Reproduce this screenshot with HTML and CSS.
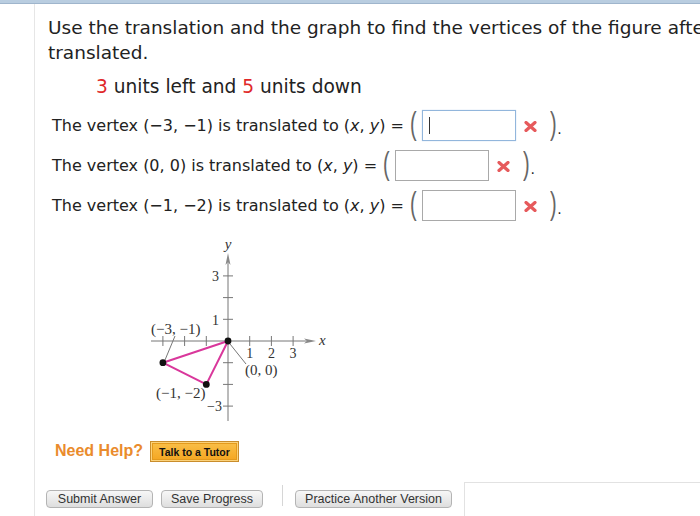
FILE: index.html
```html
<!DOCTYPE html>
<html>
<head>
<meta charset="utf-8">
<link rel="stylesheet" href="styles.css">
</head>
<body>
<div class="topbar"></div>
<div class="page">
  <div class="gutter"></div>
  <div class="content">
    <p class="prompt">
      <span class="line">Use the translation and the graph to find the vertices of the figure after it has been</span>
      <span class="line">translated.</span>
    </p>
    <p class="rule"><span class="red">3</span> units left and <span class="red">5</span> units down</p>

    <div class="rows">
      <div class="row">
        <span class="stmt">The vertex (−3, −1) is translated to (<i>x</i>, <i>y</i>) =</span>
        <span class="paren">(</span>
        <span class="box focus"><span class="caret"></span></span>
        <svg class="wrong" width="13" height="11" viewBox="0 0 13 11"><path d="M2 1.5 L11 9.5 M11 1.5 L2 9.5"/></svg>
        <span class="paren close">)</span><span class="dot">.</span>
      </div>
      <div class="row">
        <span class="stmt">The vertex (0, 0) is translated to (<i>x</i>, <i>y</i>) =</span>
        <span class="paren">(</span>
        <span class="box"></span>
        <svg class="wrong" width="13" height="11" viewBox="0 0 13 11"><path d="M2 1.5 L11 9.5 M11 1.5 L2 9.5"/></svg>
        <span class="paren close">)</span><span class="dot">.</span>
      </div>
      <div class="row">
        <span class="stmt">The vertex (−1, −2) is translated to (<i>x</i>, <i>y</i>) =</span>
        <span class="paren">(</span>
        <span class="box"></span>
        <svg class="wrong" width="13" height="11" viewBox="0 0 13 11"><path d="M2 1.5 L11 9.5 M11 1.5 L2 9.5"/></svg>
        <span class="paren close">)</span><span class="dot">.</span>
      </div>
    </div>

    <div class="graph">
      <svg width="200" height="195" viewBox="0 0 200 195">
        <g transform="translate(87,106)">
          <g class="axis">
            <line x1="-77" y1="0" x2="80" y2="0"/>
            <line x1="0" y1="-82" x2="0" y2="80"/>
            <line x1="-65.1" y1="-5" x2="-65.1" y2="5"/>
            <line x1="-43.4" y1="-5" x2="-43.4" y2="5"/>
            <line x1="-21.7" y1="-5" x2="-21.7" y2="5"/>
            <line x1="21.7" y1="-5" x2="21.7" y2="5"/>
            <line x1="43.4" y1="-5" x2="43.4" y2="5"/>
            <line x1="65.1" y1="-5" x2="65.1" y2="5"/>
            <line x1="-5" y1="-65.1" x2="5" y2="-65.1"/>
            <line x1="-5" y1="-43.4" x2="5" y2="-43.4"/>
            <line x1="-5" y1="-21.7" x2="5" y2="-21.7"/>
            <line x1="-5" y1="21.7" x2="5" y2="21.7"/>
            <line x1="-5" y1="43.4" x2="5" y2="43.4"/>
            <line x1="-5" y1="65.1" x2="5" y2="65.1"/>
            <line x1="-53" y1="-5" x2="-63" y2="19"/>
            <line x1="2" y1="3" x2="18" y2="23"/>
          </g>
          <path class="arrow" d="M76 -2.5 L88 0 L76 2.5 L79 0 Z"/>
          <path class="arrow" d="M-2.5 -76 L0 -88 L2.5 -76 L0 -79 Z"/>
          <polygon class="tri" points="0,0 -65.1,21.7 -21.7,43.4"/>
          <circle class="pt" cx="0" cy="0" r="3.4"/>
          <circle class="pt" cx="-65.1" cy="21.7" r="3.4"/>
          <circle class="pt" cx="-21.7" cy="43.4" r="3.4"/>
          <text class="ital" x="0" y="-92" text-anchor="middle">y</text>
          <text class="ital" x="91" y="4">x</text>
          <text class="num" x="-9" y="-60" text-anchor="end">3</text>
          <text class="num" x="-9" y="-16.5" text-anchor="end">1</text>
          <text class="num" x="-6" y="70" text-anchor="end">−3</text>
          <text class="num" x="21.7" y="17" text-anchor="middle">1</text>
          <text class="num" x="43.4" y="17" text-anchor="middle">2</text>
          <text class="num" x="65.1" y="17" text-anchor="middle">3</text>
          <text class="lbl" x="-77" y="-7">(−3, −1)</text>
          <text class="lbl" x="17" y="34">(0, 0)</text>
          <text class="lbl" x="-72" y="57">(−1, −2)</text>
        </g>
      </svg>
    </div>

    <div class="help">
      <span class="help-label">Need Help?</span>
      <span class="tutor"><span class="tutor-in">Talk to a Tutor</span></span>
    </div>

    <div class="actions">
      <span class="btn submit">Submit Answer</span>
      <span class="btn save">Save Progress</span>
      <span class="sep"></span>
      <span class="btn practice">Practice Another Version</span>
      <span class="panel"></span>
    </div>
  </div>
</div>
</body>
</html>
```

FILE: styles.css
```css
html, body {
  margin: 0;
  padding: 0;
  background: #fff;
  overflow: hidden;
  width: 700px;
  height: 516px;
}
body {
  font-family: "DejaVu Sans", Verdana, sans-serif;
  color: #222;
}
.topbar {
  height: 3px;
  background: #b9cde0;
  border-bottom: 1px solid #9fb5cc;
}
.page {
  display: flex;
  height: 512px;
}
.gutter {
  width: 34px;
  flex: none;
  border-right: 1px solid #e6e6e6;
}
.content {
  flex: none;
  width: 900px;
  padding-left: 13px;
  overflow: hidden;
}
.prompt {
  margin: 11px 0 0 0;
  font-size: 18.5px;
  line-height: 25px;
  color: #222;
}
.line {
  display: block;
  white-space: nowrap;
}
.rule {
  margin: 9px 0 0 48px;
  font-size: 18.6px;
  line-height: 25px;
}
.red { color: #e0282a; }
.rows {
  margin: 6px 0 0 4px;
}
.row {
  display: flex;
  align-items: center;
  height: 40px;
  font-size: 16px;
  white-space: nowrap;
}
.stmt i { font-style: italic; }
.paren {
  font-family: "Liberation Sans", sans-serif;
  font-size: 32px;
  line-height: 32px;
  color: #666;
  margin: 0 3px 4px 4px;
  transform: scaleX(0.62);
}
.paren.close {
  margin: 0 -1px 4px 11px;
}
.dot {
  font-size: 14px;
  padding-top: 8px;
}
.box {
  display: inline-block;
  box-sizing: border-box;
  width: 94px;
  height: 31px;
  border: 1px solid #a9a9a9;
  background: #fff;
  position: relative;
}
.box.focus {
  border-color: #92b6dc;
  box-shadow: 0 0 1px #b8d0ea;
}
.caret {
  position: absolute;
  left: 6px;
  top: 6px;
  width: 1px;
  height: 17px;
  background: #333;
}
.wrong {
  display: block;
  margin-left: 8px;
  margin-top: 2px;
}
.wrong path {
  stroke: #e65a5c;
  stroke-width: 3.2;
  stroke-linecap: round;
  fill: none;
}
.graph {
  margin: 10px 0 0 93px;
  height: 195px;
}
.graph svg { display: block; }
.graph text {
  font-family: "Liberation Serif", serif;
  fill: #333;
}
.graph text.num { font-size: 14px; }
.graph text.lbl { font-size: 15px; }
.graph text.ital { font-style: italic; font-size: 15px; }
.axis line {
  stroke: #777;
  stroke-width: 1;
}
.arrow { fill: #888; }
.tri {
  fill: none;
  stroke: #d9379b;
  stroke-width: 2;
  stroke-linejoin: round;
}
.pt { fill: #111; }
.help {
  display: flex;
  align-items: center;
  margin: 10px 0 0 7px;
  height: 22px;
}
.help-label {
  font-family: "Liberation Sans", Arial, sans-serif;
  font-weight: bold;
  font-size: 16px;
  color: #ea8b2c;
}
.tutor {
  margin-left: 7px;
  border: 1px solid #c98d2c;
  padding: 1px;
  background: #fbd27b;
}
.tutor-in {
  display: block;
  background: linear-gradient(#f9bd45, #f5a824);
  border: 1px solid #e49a1c;
  font-family: "Liberation Sans", Arial, sans-serif;
  font-weight: bold;
  font-size: 10.5px;
  color: #111;
  padding: 2px 6px 1px 6px;
  line-height: 12px;
}
.actions {
  display: flex;
  align-items: flex-start;
  margin: 20px 0 0 -2px;
}
.btn {
  box-sizing: border-box;
  height: 18px;
  margin-top: 8px;
  border: 1px solid #b4b4b4;
  border-radius: 4px;
  background: linear-gradient(#f7f7f7, #dedede);
  font-family: "Liberation Sans", Arial, sans-serif;
  font-size: 12.5px;
  line-height: 16px;
  color: #333;
  text-align: center;
}
.submit { width: 107px; }
.save { width: 102px; margin-left: 8px; }
.sep {
  width: 1px;
  height: 21px;
  background: #d6d6d6;
  margin: 3px 12px 0 19px;
}
.practice { width: 157px; }
.panel {
  box-sizing: border-box;
  width: 300px;
  height: 40px;
  margin-left: 12px;
  border-top: 1px solid #e2e2e2;
  border-left: 1px solid #e2e2e2;
}
```
